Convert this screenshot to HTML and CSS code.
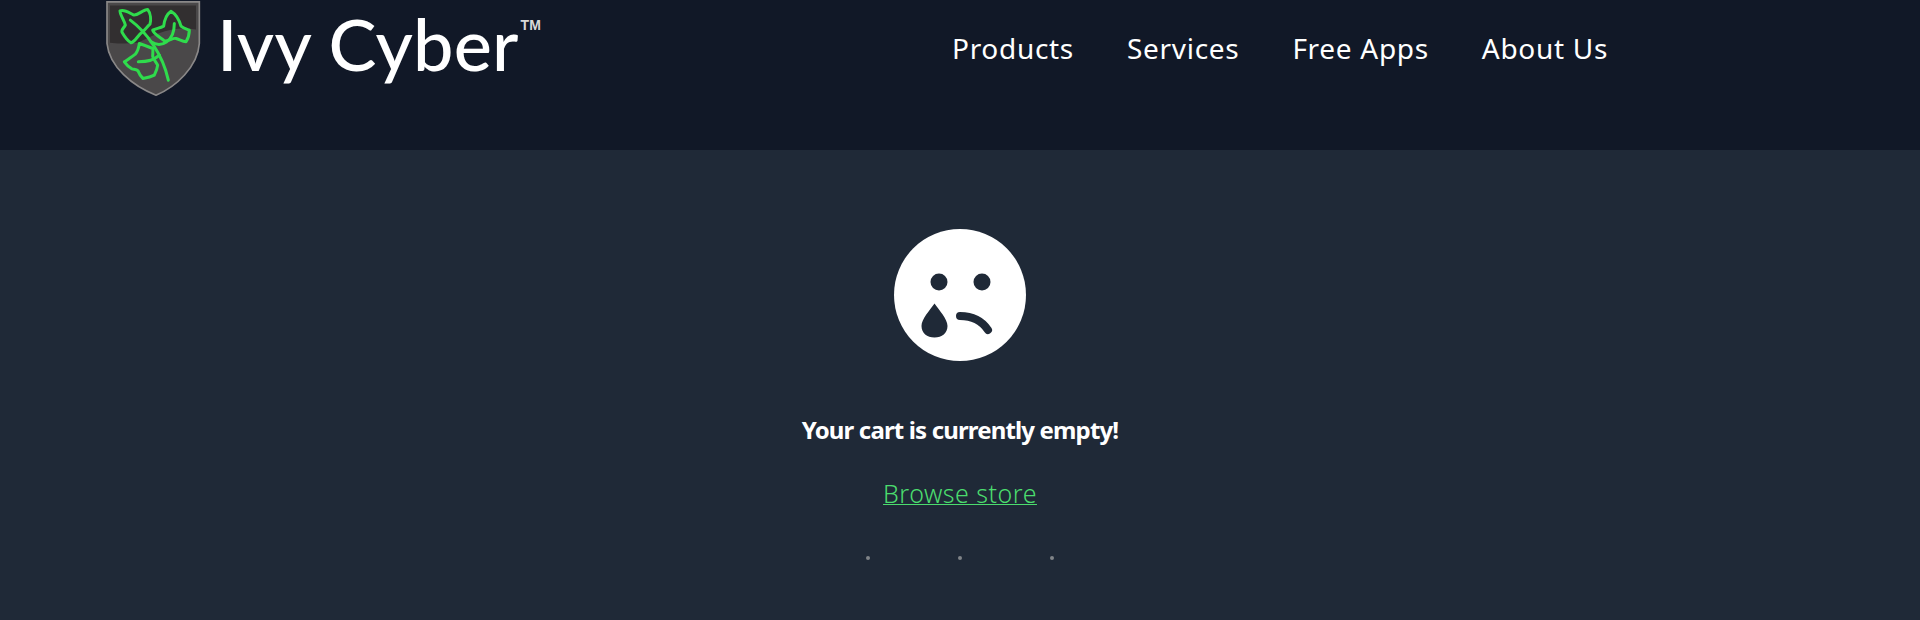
FILE: index.html
```html
<!doctype html>
<html lang="en">
  <head>
    <meta charset="UTF-8" />
    <meta name="viewport" content="width=device-width, initial-scale=1.0" />
    <title>Ivy Cyber - Cart</title>
    <link rel="stylesheet" href="styles.css">
  </head>
  <body>
    <header class="header">
      <a class="logo" href="#">
        <svg class="shield" viewBox="30 0 285 290" width="95" height="97">
          <path d="M33 5H310V130C305 200 240 260 180 285C110 258 40 200 33 130Z" fill="#4a4849" stroke="#8a8888" stroke-width="5"/>
          <path d="M42 16H300V88C230 75 170 105 125 128C95 130 65 132 42 128Z" fill="#322f30"/>
          <g fill="none" stroke="#2fdc4c" stroke-width="9" stroke-linejoin="round" stroke-linecap="round">
            <path d="M72 32C85 26 100 38 112 44C125 48 140 28 155 28C165 40 165 60 162 72C155 78 150 85 140 95C125 105 118 125 105 128C95 122 85 108 78 96C75 88 85 82 88 75C85 60 72 45 72 32Z"/>
            <path d="M225 33C212 42 205 60 203 78C192 84 180 85 170 90C172 100 192 112 205 122C218 124 230 112 240 115C250 118 260 124 270 125C276 115 280 100 280 90C270 86 262 84 255 78C250 60 240 42 225 33Z"/>
            <path d="M130 130C128 145 124 155 118 162C108 170 95 178 85 185C92 195 100 202 108 206C116 208 122 208 126 212C130 222 135 230 141 235C152 233 165 230 175 225C180 215 184 205 185 195C180 185 172 178 170 168C170 160 172 152 170 145C158 140 145 135 130 130Z"/>
            <path d="M103 60C150 95 200 160 217 240"/>
            <path d="M127 185C150 185 175 180 190 165"/>
            <path d="M165 125C195 145 235 125 235 70"/>
          </g>
        </svg>
        <span class="wordmark">Ivy Cyber</span>
        <span class="tm">TM</span>
      </a>
      <nav class="nav">
        <a href="#">Products</a>
        <a href="#">Services</a>
        <a href="#">Free Apps</a>
        <a href="#">About Us</a>
      </nav>
    </header>
    <main class="cart">
      <svg class="face" viewBox="0 0 132 132" width="132" height="132">
        <circle cx="66" cy="66" r="66" fill="#fff"/>
        <circle cx="45" cy="53" r="8.5" fill="#1f2937"/>
        <circle cx="88" cy="53" r="8.5" fill="#1f2937"/>
        <path d="M40.500 74.500C36 81 27.500 90 27.500 97C27.500 104 33 108.500 40.500 108.500C48 108.500 53.500 104 53.500 97C53.500 90 45 81 40.500 74.500Z" fill="#1f2937"/>
        <path d="M66 87C78 87 88 92 94 101" fill="none" stroke="#1f2937" stroke-width="8" stroke-linecap="round"/>
      </svg>
      <p class="message">Your cart is currently empty!</p>
      <a class="browse" href="#">Browse store</a>
      <div class="dots">
        <span></span>
        <span></span>
        <span></span>
      </div>
    </main>
  </body>
</html>
```

FILE: styles.css
```css
* {
  box-sizing: border-box;
}
html,
body {
  margin: 0;
  height: 100%;
  overflow: hidden;
}
body {
  background-color: #1f2937;
  font-family: "Noto Sans", "Open Sans", sans-serif;
  color: #ffffff;
}
a {
  color: inherit;
  text-decoration: none;
}

.header {
  display: flex;
  align-items: flex-start;
  height: 150px;
  padding-left: 106px;
  background-color: #111827;
}
.logo {
  display: flex;
  align-items: flex-start;
  width: 846px;
}
.shield {
  flex: none;
}
.wordmark {
  margin-left: 16px;
  font-family: "Lato", sans-serif;
  font-size: 72px;
  font-weight: 500;
  letter-spacing: 0.2px;
  white-space: nowrap;
}
.tm {
  margin: 18px 0 0 2px;
  font-family: "Liberation Sans", sans-serif;
  font-weight: bold;
  font-size: 14px;
  line-height: 15px;
  color: #d8d8d8;
}
.nav {
  display: flex;
  gap: 53px;
  padding-top: 29px;
  font-size: 28px;
  line-height: 38px;
  letter-spacing: 0.7px;
  white-space: nowrap;
}

.cart {
  display: flex;
  flex-direction: column;
  align-items: center;
  padding-top: 79px;
}
.message {
  margin: 53px 0 0;
  font-size: 24px;
  font-weight: bold;
  line-height: 32px;
  letter-spacing: -0.85px;
}
.browse {
  margin-top: 31px;
  font-size: 25px;
  font-weight: 300;
  line-height: 32px;
  letter-spacing: 0.5px;
  color: #4bdc6e;
  text-decoration: underline;
  text-decoration-thickness: 1px;
}
.dots {
  display: flex;
  gap: 88px;
  margin-top: 47px;
}
.dots span {
  width: 4px;
  height: 4px;
  border-radius: 50%;
  background-color: #808488;
}
```
